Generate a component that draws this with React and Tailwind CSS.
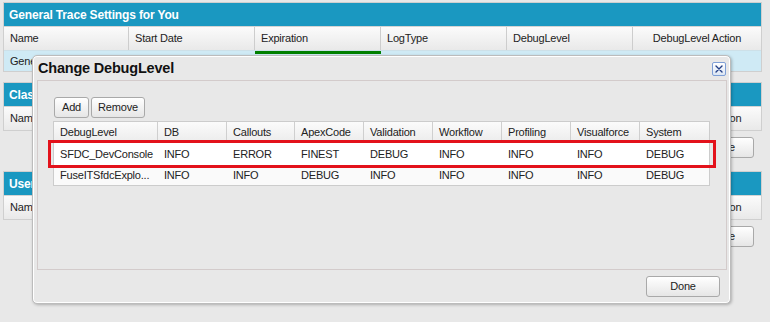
import React from "react";

const font = "font-['Liberation_Sans','Arial',sans-serif]";

function PanelHeaderRow({ children }) {
  return (
    <div className="h-[24px] flex bg-gradient-to-b from-[#fbfbfb] to-[#e9e9e9] border-t border-[#d4d4d4] text-[11px] tracking-[-0.2px] text-[#222]">
      {children}
    </div>
  );
}

function HCell({ w, children, center, last }) {
  return (
    <div
      className={`${w} h-full flex items-center ${center ? "justify-center" : "pl-[6px]"} ${last ? "" : "border-r border-[#cdcdcd]"}`}
    >
      {children}
    </div>
  );
}

function Panel({ title, children }) {
  return (
    <div className="w-[759px] border border-[#cfcfcf] bg-[#f2f2f2]">
      <div className="h-[23px] bg-[#1a98c1] text-white font-bold text-[12px] tracking-[-0.15px] pl-[5px] flex items-center">
        {title}
      </div>
      {children}
    </div>
  );
}

function SmallButton({ children, w }) {
  return (
    <div
      className={`${w} h-[21px] flex items-center justify-center rounded-[3px] border border-[#a9a9a9] bg-gradient-to-b from-[#ffffff] to-[#e6e6e6] text-[11px] text-[#222] tracking-[-0.2px]`}
    >
      {children}
    </div>
  );
}

const cols = ["DebugLevel", "DB", "Callouts", "ApexCode", "Validation", "Workflow", "Profiling", "Visualforce", "System"];
const rows = [
  ["SFDC_DevConsole", "INFO", "ERROR", "FINEST", "DEBUG", "INFO", "INFO", "INFO", "DEBUG"],
  ["FuseITSfdcExplo...", "INFO", "INFO", "DEBUG", "INFO", "INFO", "INFO", "INFO", "DEBUG"],
];

export default function App() {
  return (
    <div className={`relative w-[770px] h-[322px] overflow-hidden bg-[#e8e8e8] ${font}`}>
      <div className="pl-[3px] pt-[2px] flex flex-col">
        {/* Panel 1 */}
        <Panel title="General Trace Settings for You">
          <PanelHeaderRow>
            <HCell w="w-[125px]">Name</HCell>
            <HCell w="w-[126px]">Start Date</HCell>
            <HCell w="w-[126px]">Expiration</HCell>
            <HCell w="w-[126px]">LogType</HCell>
            <HCell w="w-[126px]">DebugLevel</HCell>
            <HCell w="w-[128px]" center last>DebugLevel Action</HCell>
          </PanelHeaderRow>
          <div className="h-[21px] flex bg-[#cfeaf5] border-t border-[#cde0e8] text-[11px] tracking-[-0.2px] text-[#222]">
            <div className="w-[251px] pl-[6px] flex items-center">General</div>
            <div className="w-[126px] h-full flex flex-col">
              <div className="h-[3px] bg-[#008000]" />
            </div>
          </div>
        </Panel>

        {/* Panel 2 */}
        <div className="mt-[10px]">
          <Panel title="Class Trace Overrides">
            <PanelHeaderRow>
              <HCell w="w-[631px]">Name</HCell>
              <HCell w="w-[128px]" center last>DebugLevel Action</HCell>
            </PanelHeaderRow>
          </Panel>
        </div>
        <div className="mt-[6px] w-[751px] flex justify-end">
          <SmallButton w="w-[78px]">Remove</SmallButton>
        </div>

        {/* Panel 3 */}
        <div className="mt-[13px]">
          <Panel title="User Trace Flags">
            <PanelHeaderRow>
              <HCell w="w-[631px]">Name</HCell>
              <HCell w="w-[128px]" center last>DebugLevel Action</HCell>
            </PanelHeaderRow>
          </Panel>
        </div>
        <div className="mt-[6px] w-[751px] flex justify-end">
          <SmallButton w="w-[78px]">Remove</SmallButton>
        </div>
      </div>

      {/* Dialog */}
      <div className="absolute left-[32px] top-[55px] w-[699px] h-[249px] rounded-[5px] border border-[#bcbcbc] bg-[#e8e8e8] shadow-[inset_0_0_0_1px_#ffffff,1px_1px_3px_rgba(0,0,0,0.25)] flex flex-col">
        <div className="h-[24px] flex items-center justify-between pl-[5px] pr-[4px]">
          <div className="font-bold text-[14.5px] tracking-[-0.2px] text-[#111] leading-none mt-[1px]">
            Change DebugLevel
          </div>
          <div className="w-[14px] h-[14px] mt-[2px] rounded-[2px] border border-[#7e9fd6] bg-gradient-to-b from-[#ffffff] to-[#dbe6f4] flex items-center justify-center">
            <svg width="10" height="10" viewBox="0 0 10 10">
              <path d="M2 2 L8 8 M8 2 L2 8" stroke="#233f86" strokeWidth="1.4" strokeLinecap="round" />
            </svg>
          </div>
        </div>

        <div className="ml-[4px] mr-[3px] h-[190px] border border-[#d3cbcb] pl-[15px] pt-[16px] flex flex-col">
          <div className="flex gap-[2px] ml-[1px]">
            <SmallButton w="w-[35px]">Add</SmallButton>
            <SmallButton w="w-[54px]">Remove</SmallButton>
          </div>
          <div className="mt-[3px] w-[657px] border border-[#cccccc] bg-white text-[11px] tracking-[-0.2px] text-[#222]">
            <div className="grid grid-cols-[104px_69px_68px_69px_69px_69px_69px_69px_69px] h-[20px] bg-gradient-to-b from-[#fbfbfb] to-[#ececec]">
              {cols.map((c, i) => (
                <div
                  key={c}
                  className={`pl-[6px] flex items-center ${i < cols.length - 1 ? "border-r border-[#cfcfcf]" : ""}`}
                >
                  {c}
                </div>
              ))}
            </div>
            {rows.map((r, ri) => (
              <div
                key={ri}
                className={`grid grid-cols-[104px_69px_68px_69px_69px_69px_69px_69px_69px] border-t border-[#e2e2e2] ${ri === 0 ? "h-[23px] bg-white" : "h-[20px] bg-[#fafafa]"}`}
              >
                {r.map((c, i) => (
                  <div key={i} className="pl-[6px] flex items-center whitespace-nowrap overflow-hidden">
                    {c}
                  </div>
                ))}
              </div>
            ))}
          </div>
        </div>

        <div className="mt-[6px] mr-[10px] flex justify-end">
          <SmallButton w="w-[74px]">Done</SmallButton>
        </div>
      </div>

      {/* Highlight box */}
      <div className="absolute left-[48px] top-[140px] w-[668px] h-[28px] border-[3px] border-[#e3121b]" />
    </div>
  );
}
